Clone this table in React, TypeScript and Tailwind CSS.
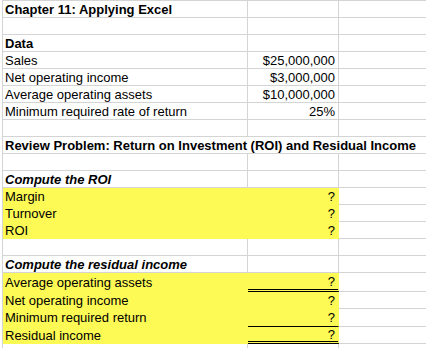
import React from 'react';

const GRID = 'grid grid-cols-[245px_91px_1fr]';
const YELLOW = 'bg-[#fdf955]';

type RowProps = {
  label?: string;
  value?: string;
  labelClass?: string;
  yellow?: boolean;
  height?: string;
  valueBorder?: string;
};

function Row({
  label = '',
  value = '',
  labelClass = '',
  yellow = false,
  height = 'h-[17px]',
  valueBorder = '',
}: RowProps) {
  const c1 = yellow
    ? `${YELLOW} border-r border-b border-[#fdf955]`
    : 'border-r border-b border-[#d4d4d4]';
  const c2 = yellow
    ? `${YELLOW} border-r border-r-[#fdf955] ${valueBorder || 'border-b border-b-[#fdf955]'}`
    : 'border-r border-b border-[#d4d4d4]';

  return (
    <div className={`${GRID} ${height}`}>
      <div className={`${c1} flex items-center px-[2px] whitespace-nowrap ${labelClass}`}>{label}</div>
      <div className={`${c2} flex items-center justify-end pr-[3px]`}>{value}</div>
      <div className="border-b border-[#d4d4d4]" />
    </div>
  );
}

export default function App() {
  return (
    <div
      className="w-[426px] h-[348px] overflow-hidden bg-white text-black text-[13px] leading-none"
      style={{ fontFamily: '"Liberation Sans", Arial, sans-serif' }}
    >
      <div className="ml-[2px] border-l border-t border-[#d4d4d4]">
        <Row label="Chapter 11: Applying Excel" labelClass="font-bold" />
        <Row />
        <Row label="Data" labelClass="font-bold" />
        <Row label="Sales" value="$25,000,000" />
        <Row label="Net operating income" value="$3,000,000" />
        <Row label="Average operating assets" value="$10,000,000" />
        <Row label="Minimum required rate of return" value="25%" />
        <Row />

        {/* heading overflows across the columns */}
        <div className="h-[17px] border-b border-[#d4d4d4] flex items-center px-[2px] font-bold whitespace-nowrap">
          Review Problem: Return on Investment (ROI) and Residual Income
        </div>

        <Row />
        <Row label="Compute the ROI" labelClass="font-bold italic" />
        <Row label="Margin" value="?" yellow />
        <Row label="Turnover" value="?" yellow />
        <Row label="ROI" value="?" yellow />
        <Row />
        <Row label="Compute the residual income" labelClass="font-bold italic" />
        <Row
          label="Average operating assets"
          value="?"
          yellow
          height="h-[19px]"
          valueBorder="border-b-[3px] border-double border-b-black"
        />
        <Row label="Net operating income" value="?" yellow />
        <Row
          label="Minimum required return"
          value="?"
          yellow
          height="h-[18px]"
          valueBorder="border-b border-b-black"
        />
        <Row
          label="Residual income"
          value="?"
          yellow
          valueBorder="border-b-[3px] border-double border-b-black"
        />
        <Row />
      </div>
    </div>
  );
}
